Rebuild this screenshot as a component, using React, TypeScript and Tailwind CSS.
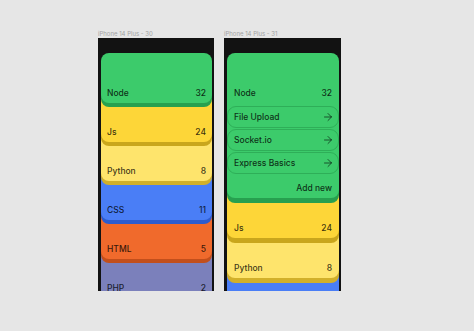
import React from "react";
import { ArrowRight } from "lucide-react";

const Row = ({ name, n, className }: { name: string; n: string; className?: string }) => (
  <div className={`flex items-center justify-between h-[10px] leading-[10px] ${className ?? ""}`}>
    <span>{name}</span>
    <span>{n}</span>
  </div>
);

export default function App() {
  return (
    <div
      className="w-[474px] h-[331px] bg-[#e6e6e6] overflow-hidden pt-[30px] pl-[98px] flex gap-[10px] text-[8.5px] font-medium text-[rgba(0,0,0,0.78)]"
      style={{ fontFamily: "Inter, 'Noto Sans', sans-serif" }}
    >
      {/* Frame 30 */}
      <div className="flex flex-col">
        <div className="text-[6px] leading-[8px] font-normal text-[#a3a3a3]">iPhone 14 Plus - 30</div>
        <div className="w-[116px] h-[253px] bg-[#121212] overflow-hidden pt-[15px] pl-[3px] pr-[2px] flex flex-col">
          <div className="relative z-[60] h-[50px] shrink-0 bg-[#3ccb6b] rounded-[8px] shadow-[0_4px_0_#27a04f] px-[6px] pb-[5px] flex flex-col justify-end">
            <Row name="Node" n="32" />
          </div>
          <div className="relative z-[50] -mt-[14px] h-[53px] shrink-0 bg-[#fdd638] rounded-[8px] shadow-[0_4px_0_#c9a61c] px-[6px] pb-[5px] flex flex-col justify-end">
            <Row name="Js" n="24" />
          </div>
          <div className="relative z-[40] -mt-[14px] h-[53px] shrink-0 bg-[#fee46c] rounded-[8px] shadow-[0_4px_0_#d2b02a] px-[6px] pb-[5px] flex flex-col justify-end">
            <Row name="Python" n="8" />
          </div>
          <div className="relative z-[30] -mt-[14px] h-[53px] shrink-0 bg-[#4a7ef6] rounded-[8px] shadow-[0_4px_0_#2d5ccf] px-[6px] pb-[5px] flex flex-col justify-end">
            <Row name="CSS" n="11" />
          </div>
          <div className="relative z-[20] -mt-[14px] h-[53px] shrink-0 bg-[#f06a2c] rounded-[8px] shadow-[0_4px_0_#c24f1c] px-[6px] pb-[5px] flex flex-col justify-end">
            <Row name="HTML" n="5" />
          </div>
          <div className="relative z-[10] -mt-[14px] h-[53px] shrink-0 bg-[#7b80bb] rounded-[8px] shadow-[0_4px_0_#5a5f99] px-[6px] pb-[5px] flex flex-col justify-end">
            <Row name="PHP" n="2" />
          </div>
        </div>
      </div>

      {/* Frame 31 */}
      <div className="flex flex-col">
        <div className="text-[6px] leading-[8px] font-normal text-[#a3a3a3]">iPhone 14 Plus - 31</div>
        <div className="w-[117px] h-[253px] bg-[#121212] overflow-hidden pt-[15px] pl-[3px] pr-[2px] flex flex-col">
          <div className="relative z-[60] h-[145px] shrink-0 bg-[#3ccb6b] rounded-[8px] shadow-[0_5px_0_#27a04f] pt-[35px] pb-[6px] flex flex-col">
            <Row name="Node" n="32" className="px-[7px]" />
            <div className="mt-[8px] flex flex-col gap-[1px]">
              {["File Upload", "Socket.io", "Express Basics"].map((t) => (
                <div
                  key={t}
                  className="h-[22px] rounded-[9px] border border-[#2eaf58] pl-[6px] pr-[4px] flex items-center justify-between"
                >
                  <span>{t}</span>
                  <ArrowRight size={12} strokeWidth={1.5} />
                </div>
              ))}
            </div>
            <div className="mt-[9px] h-[10px] leading-[10px] text-right px-[7px]">Add new</div>
          </div>
          <div className="relative z-[50] -mt-[14px] h-[54px] shrink-0 bg-[#fdd638] rounded-[8px] shadow-[0_5px_0_#c9a61c] px-[7px] pb-[5px] flex flex-col justify-end">
            <Row name="Js" n="24" />
          </div>
          <div className="relative z-[40] -mt-[14px] h-[54px] shrink-0 bg-[#fee46c] rounded-[8px] shadow-[0_5px_0_#d2b02a] px-[7px] pb-[5px] flex flex-col justify-end">
            <Row name="Python" n="8" />
          </div>
          <div className="relative z-[30] -mt-[14px] h-[54px] shrink-0 bg-[#4a7ef6] rounded-[8px] shadow-[0_5px_0_#2d5ccf]" />
        </div>
      </div>
    </div>
  );
}
